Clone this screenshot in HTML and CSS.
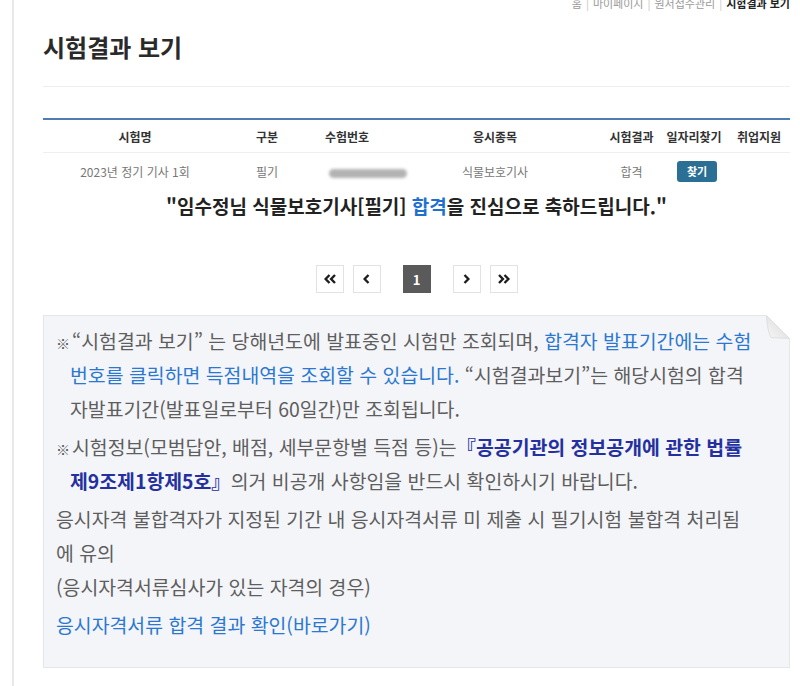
FILE: index.html
```html
<!DOCTYPE html>
<html lang="ko">
<head>
<meta charset="utf-8">
<title>시험결과 보기</title>
<link rel="stylesheet" href="styles.css">
</head>
<body>
<div class="page">
  <div class="crumbs"><span>홈</span><span class="sep">|</span><span>마이페이지</span><span class="sep">|</span><span>원서접수관리</span><span class="sep">|</span><span class="current">시험결과 보기</span></div>
  <h1 class="title">시험결과 보기</h1>
  <hr class="rule">
  <table class="result">
    <colgroup>
      <col class="c1"><col class="c2"><col class="c3"><col class="c4"><col class="c5"><col class="c6"><col class="c7">
    </colgroup>
    <thead>
      <tr><th>시험명</th><th>구분</th><th>수험번호</th><th>응시종목</th><th>시험결과</th><th>일자리찾기</th><th>취업지원</th></tr>
    </thead>
    <tbody>
      <tr><td>2023년 정기 기사 1회</td><td>필기</td><td><span class="masked"></span></td><td>식물보호기사</td><td>합격</td><td><span class="find">찾기</span></td><td></td></tr>
    </tbody>
  </table>
  <p class="congrats">"임수정님 식물보호기사[필기] <span class="pass">합격</span>을 진심으로 축하드립니다."</p>
  <nav class="pager">
    <span class="pg"><svg width="12" height="10" viewBox="0 0 12 10"><polyline points="5.5,1 1.6,5 5.5,9" /><polyline points="11,1 7.1,5 11,9" /></svg></span>
    <span class="pg"><svg width="7" height="10" viewBox="0 0 7 10"><polyline points="5.5,1 1.6,5 5.5,9" /></svg></span>
    <span class="pg on">1</span>
    <span class="pg"><svg width="7" height="10" viewBox="0 0 7 10"><polyline points="1.5,1 5.4,5 1.5,9" /></svg></span>
    <span class="pg"><svg width="12" height="10" viewBox="0 0 12 10"><polyline points="1,1 4.9,5 1,9" /><polyline points="6.5,1 10.4,5 6.5,9" /></svg></span>
  </nav>
  <div class="notice">
    <div class="fold"><svg width="24" height="24" viewBox="0 0 24 24"><defs><linearGradient id="fg" x1="0" y1="1" x2="1" y2="0"><stop offset="0" stop-color="#f8f8f8"/><stop offset="1" stop-color="#d4d4d4"/></linearGradient></defs><path d="M0 0H24V24Z" fill="#fff"/><path d="M0.5 0.5 L23.5 23.5 L5 22.5 Q1.2 16 0.5 0.5Z" fill="url(#fg)" stroke="#dadada" stroke-width="0.8"/></svg></div>
    <p class="note"><span class="mark">※</span>“시험결과 보기” 는 당해년도에 발표중인 시험만 조회되며, <span class="link">합격자 발표기간에는 수험<br>번호를 클릭하면 득점내역을 조회할 수 있습니다.</span> “시험결과보기”는 해당시험의 합격<br>자발표기간(발표일로부터 60일간)만 조회됩니다.</p>
    <p class="note"><span class="mark">※</span>시험정보(모범답안, 배점, 세부문항별 득점 등)는<span class="law">『공공기관의 정보공개에 관한 법률<br>제9조제1항제5호』</span>의거 비공개 사항임을 반드시 확인하시기 바랍니다.</p>
    <p>응시자격 불합격자가 지정된 기간 내 응시자격서류 미 제출 시 필기시험 불합격 처리됨<br>에 유의<br>(응시자격서류심사가 있는 자격의 경우)</p>
    <p class="link">응시자격서류 합격 결과 확인(바로가기)</p>
  </div>
</div>
</body>
</html>
```

FILE: styles.css
```css
html, body {
  margin: 0;
  padding: 0;
  background: #fff;
}

body {
  font-family: "Noto Sans CJK KR", "Noto Sans", sans-serif;
}

.page {
  margin-left: 12px;
  border-left: 2px solid #e8e8e8;
  min-height: 686px;
  box-sizing: border-box;
  padding: 1px 10px 0 29px;
}

.crumbs {
  margin-top: -5px;
  text-align: right;
  font-size: 11px;
  line-height: 14px;
  color: #9a9a9a;
}

.crumbs .sep {
  color: #c6c6c6;
  margin: 0 4px;
}

.crumbs .current {
  color: #222;
  font-weight: 700;
}

.title {
  margin: 22px 0 0;
  font-size: 24px;
  line-height: 30px;
  font-weight: 700;
  color: #2a2a2a;
}

.rule {
  margin: 24px 0 0;
  border: 0;
  border-top: 1px solid #eeeeee;
  height: 0;
}

.result {
  margin-top: 31px;
  width: 100%;
  border-collapse: collapse;
  table-layout: fixed;
  border-top: 2px solid #4f7db0;
}

.c1 { width: 184px; }
.c2 { width: 80px; }
.c3 { width: 80px; }
.c4 { width: 216px; }
.c5 { width: 57px; }
.c6 { width: 68px; }
.c7 { width: 62px; }

.result th {
  height: 32px;
  padding: 0;
  font-size: 12px;
  font-weight: 700;
  color: #333;
  text-align: center;
  border-bottom: 1px solid #efefef;
  white-space: nowrap;
}

.result td {
  height: 36px;
  padding: 0;
  font-size: 12px;
  color: #777;
  text-align: center;
  white-space: nowrap;
}

.masked {
  display: inline-block;
  width: 78px;
  height: 9px;
  margin-left: 22px;
  border-radius: 5px;
  background: #b3b3b3;
  filter: blur(1.5px);
  vertical-align: middle;
}

.find {
  display: inline-block;
  width: 40px;
  height: 21px;
  line-height: 21px;
  border-radius: 3px;
  background: #2b6f95;
  color: #fff;
  font-size: 11px;
  font-weight: 700;
  margin-left: 6px;
}

.congrats {
  margin: 4px 0 0;
  text-align: center;
  font-size: 19px;
  line-height: 26px;
  font-weight: 700;
  color: #222;
}

.congrats .pass {
  color: #1f6fd0;
}

.pager {
  margin-top: 46px;
  display: flex;
  justify-content: center;
  gap: 9px;
}

.pg {
  width: 28px;
  height: 28px;
  box-sizing: border-box;
  border: 1px solid #e2e2e2;
  background: #fff;
  display: flex;
  align-items: center;
  justify-content: center;
}

.pg svg polyline {
  fill: none;
  stroke: #1e1e1e;
  stroke-width: 2.4;
}

.pg.on {
  margin: 0 13px;
  background: #5a5a5a;
  border-color: #5a5a5a;
  color: #fff;
  font-size: 13px;
  font-weight: 700;
}

.notice {
  position: relative;
  margin-top: 22px;
  background: #f4f5f9;
  border: 1px solid #e3e6eb;
  padding: 8px 14px 25px 12px;
}

.fold {
  position: absolute;
  top: -1px;
  right: -1px;
  width: 24px;
  height: 24px;
}

.fold svg {
  display: block;
}

.notice p {
  margin: 0;
  font-size: 19.4px;
  line-height: 34px;
  color: #5e5e5e;
  white-space: nowrap;
}

.notice p + p {
  margin-top: 4px;
}

.notice .note {
  padding-left: 14px;
  text-indent: -14px;
}

.mark {
  display: inline-block;
  text-indent: 0;
  width: 16px;
  font-size: 14px;
  line-height: 1;
  color: #555;
}

.link {
  color: #2b78d0;
}

.notice p.link {
  color: #2b78d0;
}

.law {
  color: #2530a0;
  font-weight: 700;
}
```
